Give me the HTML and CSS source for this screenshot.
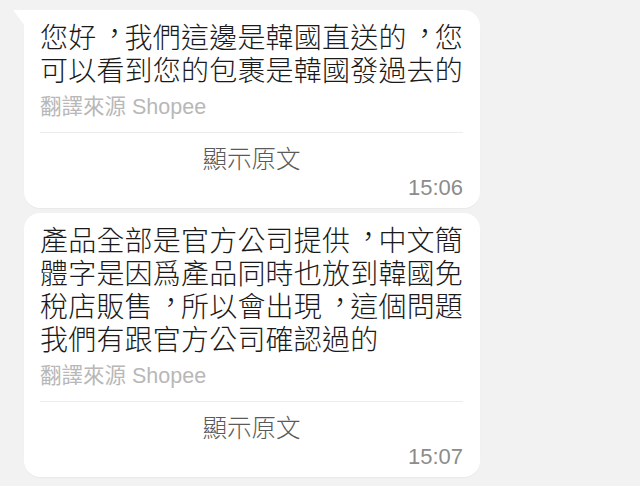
FILE: index.html
```html
<!DOCTYPE html>
<html lang="zh-TW">
<head>
<meta charset="utf-8">
<link rel="stylesheet" href="styles.css">
</head>
<body>
<div class="chat">
  <div class="bubble first">
    <div class="msg">您好<span class="p">，</span>我們這邊是韓國直送的<span class="p">，</span>您可以看到您的包裹是韓國發過去的</div>
    <div class="source">翻譯來源 Shopee</div>
    <div class="divider"></div>
    <div class="original">顯示原文</div>
    <div class="time">15:06</div>
  </div>
  <div class="bubble">
    <div class="msg">產品全部是官方公司提供<span class="p">，</span>中文簡體字是因爲產品同時也放到韓國免稅店販售<span class="p">，</span>所以會出現<span class="p">，</span>這個問題我們有跟官方公司確認過的</div>
    <div class="source">翻譯來源 Shopee</div>
    <div class="divider"></div>
    <div class="original">顯示原文</div>
    <div class="time">15:07</div>
  </div>
</div>
</body>
</html>
```

FILE: styles.css
```css
html, body {
  margin: 0;
  padding: 0;
  background: #f2f2f2;
  height: 100%;
  overflow: hidden;
}
.chat {
  display: flex;
  flex-direction: column;
  gap: 5px;
  padding: 10px 0 0 24px;
  font-family: "Liberation Sans", "Noto Sans CJK TC", sans-serif;
}
.bubble {
  position: relative;
  width: 456px;
  box-sizing: border-box;
  background: #ffffff;
  border-radius: 16px;
  padding: 10px 14px 7px 16px;
  box-shadow: 0 1px 1px rgba(0, 0, 0, 0.04);
}
.bubble.first {
  border-top-left-radius: 0;
}
.bubble.first::before {
  content: "";
  position: absolute;
  left: -11px;
  top: 0;
  width: 12px;
  height: 16px;
  background: #ffffff;
  clip-path: polygon(0 0, 100% 0, 100% 100%);
}
.msg {
  font-family: "Noto Sans CJK TC", sans-serif;
  font-weight: 300;
  font-size: 28px;
  line-height: 33px;
  letter-spacing: 0.2px;
  color: #1a1a1a;
}
.p {
  line-height: 0;
  vertical-align: 4px;
  margin-left: 4px;
  margin-right: -4px;
}
.source {
  margin-top: 8px;
  font-family: "Liberation Sans", "Noto Sans CJK TC", sans-serif;
  font-size: 21.5px;
  line-height: 26px;
  color: #b8b8b8;
}
.divider {
  margin-top: 12px;
  margin-right: 3px;
  height: 1px;
  background: #ececec;
}
.original {
  margin-top: 10px;
  padding-right: 3px;
  text-align: center;
  font-family: "Noto Sans CJK TC", sans-serif;
  font-weight: 300;
  font-size: 24.5px;
  line-height: 30px;
  color: #5a5a5a;
}
.time {
  margin-top: 2px;
  padding-right: 3px;
  text-align: right;
  font-family: "Liberation Sans", sans-serif;
  font-size: 22px;
  line-height: 26px;
  color: #8c8c8c;
}
```
